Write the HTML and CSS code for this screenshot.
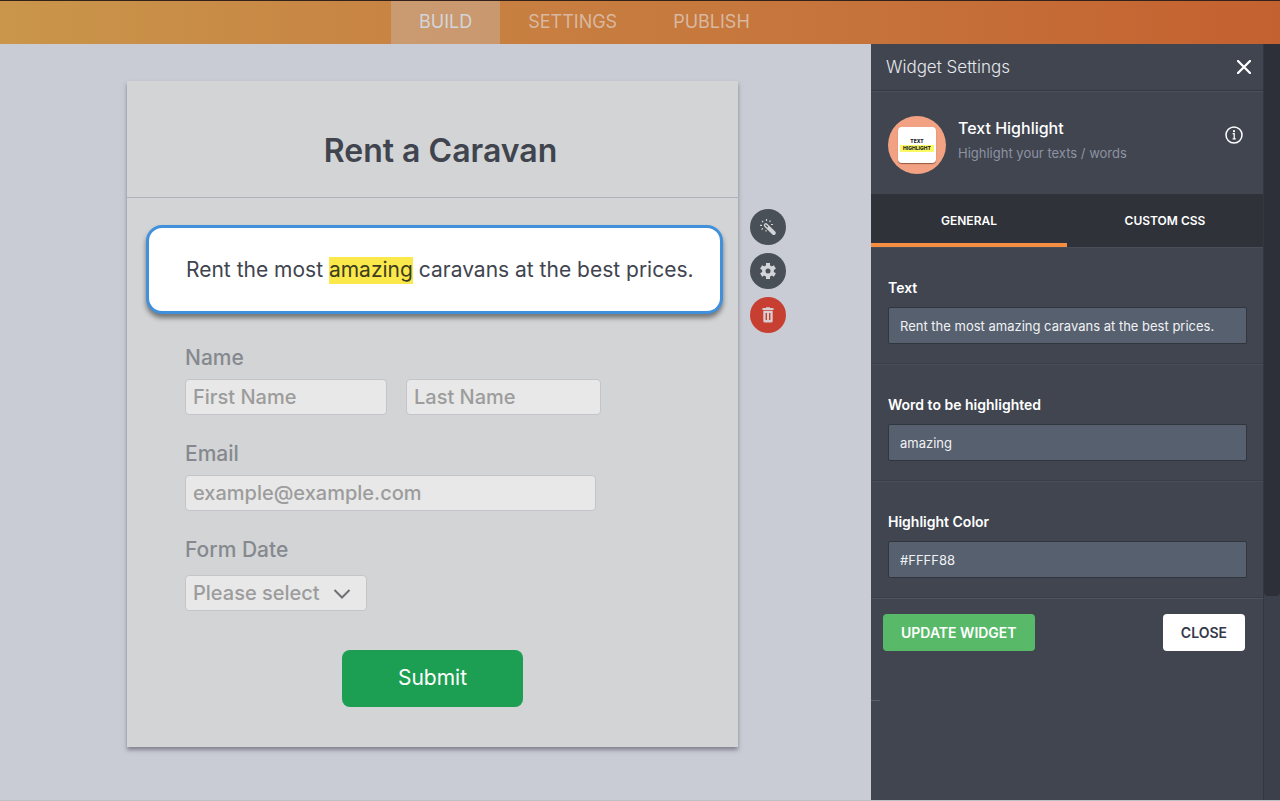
FILE: index.html
```html
<!DOCTYPE html>
<html lang="en">
<head>
    <meta charset="UTF-8">
    <meta name="viewport" content="width=device-width, initial-scale=1.0">
    <title>Form Builder</title>
    <link rel="stylesheet" href="styles.css">
</head>
<body>
    <nav class="topbar">
        <a href="#" class="topTab active">BUILD</a>
        <a href="#" class="topTab">SETTINGS</a>
        <a href="#" class="topTab">PUBLISH</a>
    </nav>
    <div class="builder">
        <main class="canvas">
            <form class="card">
                <h1 class="formTitle">Rent a Caravan</h1>
                <p class="highlightBox">Rent the most <mark>amazing</mark> caravans at the best prices.</p>
                <div class="fields">
                    <label class="fieldLabel" for="firstName">Name</label>
                    <div class="nameRow">
                        <input class="field" type="text" id="firstName" placeholder="First Name">
                        <input class="field" type="text" aria-label="Last Name" placeholder="Last Name">
                    </div>
                    <label class="fieldLabel" for="email">Email</label>
                    <input class="field emailField" type="email" id="email" placeholder="example@example.com">
                    <label class="fieldLabel" for="formDate">Form Date</label>
                    <div class="selectWrap">
                        <select class="field" id="formDate">
                            <option>Please select</option>
                        </select>
                        <svg class="chevron" width="18" height="12" viewBox="0 0 18 12"><path d="M1.5 2 L9 9.5 L16.5 2" fill="none" stroke="#6f7073" stroke-width="2"/></svg>
                    </div>
                </div>
                <button type="button" class="submit">Submit</button>
            </form>
            <div class="tools">
                <button class="tool" aria-label="Wizard">
                    <svg width="18" height="18" viewBox="0 0 18 18">
                        <path d="M6.8 7.2 L14.8 15" stroke="#d3d4d9" stroke-width="4" stroke-linecap="round"/>
                        <path d="M6.7 7.1 L8.4 8.8" stroke="#495057" stroke-width="1.3" stroke-linecap="round"/>
                        <path d="M7.5 1 V3 M11.5 2.5 L10.5 4 M3 3 L4.2 4.2 M1 7.3 H3 M2.5 11.6 L4 10.6 M12 6.5 H14 M7 12 V13.5" stroke="#d3d4d9" stroke-width="1.2"/>
                    </svg>
                </button>
                <button class="tool" aria-label="Settings">
                    <svg width="18" height="18" viewBox="0 0 18 18">
                        <path d="M9 1 V17 M2.1 5 L15.9 13 M2.1 13 L15.9 5" stroke="#d3d4d9" stroke-width="4"/>
                        <circle cx="9" cy="9" r="4.2" fill="none" stroke="#d3d4d9" stroke-width="3.4"/>
                        <circle cx="9" cy="9" r="2.5" fill="#495057"/>
                    </svg>
                </button>
                <button class="tool delete" aria-label="Delete">
                    <svg width="12" height="16" viewBox="0 0 12 16">
                        <path fill="#d8cfd2" fill-rule="evenodd" d="M.5 1 H4 V.3 H8 V1 H11.5 V3 H.5 Z M1.3 3.8 H10.7 V14 Q10.7 15.5 9.2 15.5 H2.8 Q1.3 15.5 1.3 14 Z M3.6 6 V13 H5 V6 Z M7 6 V13 H8.4 V6 Z"/>
                    </svg>
                </button>
            </div>
        </main>
        <aside class="panel">
            <div class="panelBody">
                <header class="panelHeader">
                    <h2 class="panelTitle">Widget Settings</h2>
                    <button class="iconButton" aria-label="Close panel">
                        <svg width="14" height="14" viewBox="0 0 14 14"><path d="M1 1 L13 13 M13 1 L1 13" stroke="#fff" stroke-width="2.3" stroke-linecap="round"/></svg>
                    </button>
                </header>
                <section class="widgetInfo">
                    <div class="widgetIcon">
                        <div class="widgetTile">TEXT<span>HIGHLIGHT</span></div>
                    </div>
                    <div class="widgetText">
                        <h3 class="widgetName">Text Highlight</h3>
                        <p class="widgetDesc">Highlight your texts / words</p>
                    </div>
                    <button class="iconButton infoButton" aria-label="Info">
                        <svg width="18" height="18" viewBox="0 0 18 18"><circle cx="9" cy="9" r="8" fill="none" stroke="#fff" stroke-width="1.5"/><path d="M7.6 7.7 H9.2 V12.8 M7.6 12.8 H10.8" fill="none" stroke="#fff" stroke-width="1.3"/><circle cx="9" cy="5.2" r="1.1" fill="#fff"/></svg>
                    </button>
                </section>
                <div class="tabs">
                    <button class="tab selected">GENERAL</button>
                    <button class="tab">CUSTOM CSS</button>
                </div>
                <section class="setting">
                    <label for="text">Text</label>
                    <input type="text" id="text" value="Rent the most amazing caravans at the best prices.">
                </section>
                <section class="setting">
                    <label for="word">Word to be highlighted</label>
                    <input type="text" id="word" value="amazing">
                </section>
                <section class="setting">
                    <label for="color">Highlight Color</label>
                    <input type="text" id="color" value="#FFFF88">
                </section>
                <footer class="panelFooter">
                    <button class="update">UPDATE WIDGET</button>
                    <button class="close">CLOSE</button>
                </footer>
            </div>
            <div class="scrollTrack"><div class="scrollThumb"></div></div>
        </aside>
    </div>
</body>
</html>
```
FILE: styles.css
```css
* {
    box-sizing: border-box;
}
body {
    margin: 0;
    min-height: 100vh;
    display: flex;
    flex-direction: column;
    border-bottom: 1px solid #bfc0c4;
    font-family: Inter, "Liberation Sans", sans-serif;
    color: #40444f;
}
h1, h2, h3, p {
    margin: 0;
}
button, input, select {
    font-family: inherit;
}
button {
    border: none;
    padding: 0;
    cursor: pointer;
}

.topbar {
    display: flex;
    height: 44px;
    padding-left: 391px;
    border-top: 1px solid #33221a;
    background: linear-gradient(to right, #c9964b, #c88443 30%, #c6743b 65%, #c46130);
}
.topTab {
    display: flex;
    align-items: center;
    padding: 0 28px 2px;
    font-size: 18px;
    color: #d8b8a0;
    text-decoration: none;
}
.topTab.active {
    background-color: rgba(208, 210, 218, 0.3);
    color: #d3d5da;
}

.builder {
    flex: 1;
    display: flex;
}
.canvas {
    flex: 1;
    display: flex;
    align-items: flex-start;
    gap: 12px;
    padding: 37px 85px 52px 127px;
    background-color: #c9cbd5;
}
.card {
    flex: 1;
    padding-bottom: 40px;
    background-color: #d3d4d5;
    box-shadow: 0 3px 4px rgba(60, 60, 80, 0.5);
}
.formTitle {
    padding: 50px 0 27px 16px;
    border-bottom: 1px solid #b0b1bc;
    font-size: 32px;
    font-weight: 600;
    line-height: 39px;
    text-align: center;
}
.highlightBox {
    margin: 27px 15px 30px 19px;
    padding: 28px 20px 27px 37px;
    border: 3px solid #4090db;
    border-radius: 16px;
    background-color: #fff;
    box-shadow: 0 4px 5px rgba(0, 0, 0, 0.45);
    font-size: 21px;
    line-height: 28px;
}
.highlightBox mark {
    padding: 0 0 2px;
    background-color: #fbe94b;
    color: #3d3d22;
}
.fields {
    padding: 0 58px;
}
.fieldLabel {
    display: block;
    margin-bottom: 7px;
    font-size: 21px;
    font-weight: 500;
    line-height: 28px;
    color: #85898f;
}
.field {
    width: 100%;
    height: 36px;
    margin-bottom: 25px;
    padding: 0 7px;
    border: 1px solid #c4c4cb;
    border-radius: 4px;
    background-color: #e8e8e8;
    font-size: 20px;
    font-weight: 500;
    color: #9c9c9c;
}
.field::placeholder {
    color: #9c9c9c;
}
.nameRow {
    display: grid;
    grid-template-columns: 202fr 195fr;
    gap: 19px;
    max-width: 416px;
}
.emailField {
    display: block;
    max-width: 411px;
}
.selectWrap {
    position: relative;
    max-width: 182px;
    padding-top: 4px;
}
.selectWrap .field {
    display: block;
    margin-bottom: 39px;
    appearance: none;
}
.chevron {
    position: absolute;
    right: 16px;
    top: 17px;
    pointer-events: none;
}
.submit {
    display: block;
    width: 181px;
    height: 57px;
    margin: 0 auto;
    padding-bottom: 2px;
    border-radius: 8px;
    background-color: #1c9f53;
    color: #fff;
    font-size: 21px;
}
.tools {
    display: flex;
    flex-direction: column;
    gap: 8px;
    padding-top: 128px;
}
.tool {
    display: flex;
    align-items: center;
    justify-content: center;
    width: 36px;
    height: 36px;
    border-radius: 50%;
    background-color: #495057;
}
.tool.delete {
    background-color: #c73f30;
}

.panel {
    display: flex;
    flex-shrink: 0;
    width: 409px;
    background-color: #404550;
    color: #fff;
}
.panelBody {
    flex: 1;
}
.panelHeader {
    display: flex;
    align-items: center;
    justify-content: space-between;
    height: 47px;
    padding: 0 12px 0 15px;
    border-bottom: 1px solid #343841;
}
.panelTitle {
    font-size: 17px;
    font-weight: 300;
    color: #e6e8eb;
}
.iconButton {
    display: flex;
    background: none;
}
.widgetInfo {
    display: flex;
    height: 103px;
    padding: 24px 20px 0 17px;
    border-top: 1px solid #4a505c;
}
.widgetIcon {
    display: flex;
    align-items: center;
    justify-content: center;
    width: 58px;
    height: 58px;
    border-radius: 50%;
    background-color: #f2a283;
}
.widgetTile {
    width: 38px;
    height: 36px;
    padding-top: 11px;
    border-radius: 4px;
    background-color: #fff;
    box-shadow: 0 1px 1px rgba(90, 40, 20, 0.6);
    font-size: 5px;
    font-weight: 800;
    line-height: 7px;
    text-align: center;
    color: #222;
}
.widgetTile span {
    display: block;
    margin: 0 2px;
    background-color: #fbf964;
}
.widgetText {
    flex: 1;
    padding-left: 12px;
}
.widgetName {
    font-size: 16px;
    font-weight: 500;
    line-height: 24px;
}
.widgetDesc {
    padding-top: 4px;
    font-size: 13px;
    line-height: 18px;
    color: #8d93a1;
}
.infoButton {
    align-self: flex-start;
    padding-top: 10px;
}
.tabs {
    display: flex;
    height: 53px;
    background-color: #2f3239;
}
.tab {
    flex: 1;
    padding-top: 4px;
    background: none;
    border-bottom: 4px solid transparent;
    color: #fff;
    font-size: 12px;
    font-weight: 600;
}
.tab.selected {
    border-bottom-color: #f58d42;
}
.setting {
    padding: 30px 16px 19px 17px;
    border-top: 1px solid #484e59;
    border-bottom: 1px solid #3a3e48;
}
.setting label {
    display: block;
    margin-bottom: 9px;
    font-size: 14px;
    font-weight: 600;
    line-height: 20px;
}
.setting input {
    display: block;
    width: 100%;
    height: 37px;
    padding: 0 11px;
    border: 1px solid #31353e;
    border-radius: 2px;
    background-color: #57606f;
    color: #f0f2f4;
    font-size: 13px;
}
.panelFooter {
    position: relative;
    display: flex;
    justify-content: space-between;
    height: 103px;
    padding: 15px 18px 0 12px;
    border-top: 1px solid #4d5461;
}
.panelFooter::after {
    content: "";
    position: absolute;
    left: 0;
    bottom: 0;
    width: 9px;
    height: 1px;
    background-color: #56606f;
}
.panelFooter button {
    height: 37px;
    padding: 0 18px;
    border-radius: 4px;
    font-size: 14px;
    font-weight: 600;
}
.update {
    background-color: #58ba68;
    color: #fff;
}
.close {
    background-color: #fff;
    color: #33384a;
}
.scrollTrack {
    width: 17px;
    border-left: 1px solid #33373f;
    background-color: #3b404b;
}
.scrollThumb {
    height: 73%;
    border-radius: 0 0 4px 4px;
    background-color: #2d3038;
}
```
